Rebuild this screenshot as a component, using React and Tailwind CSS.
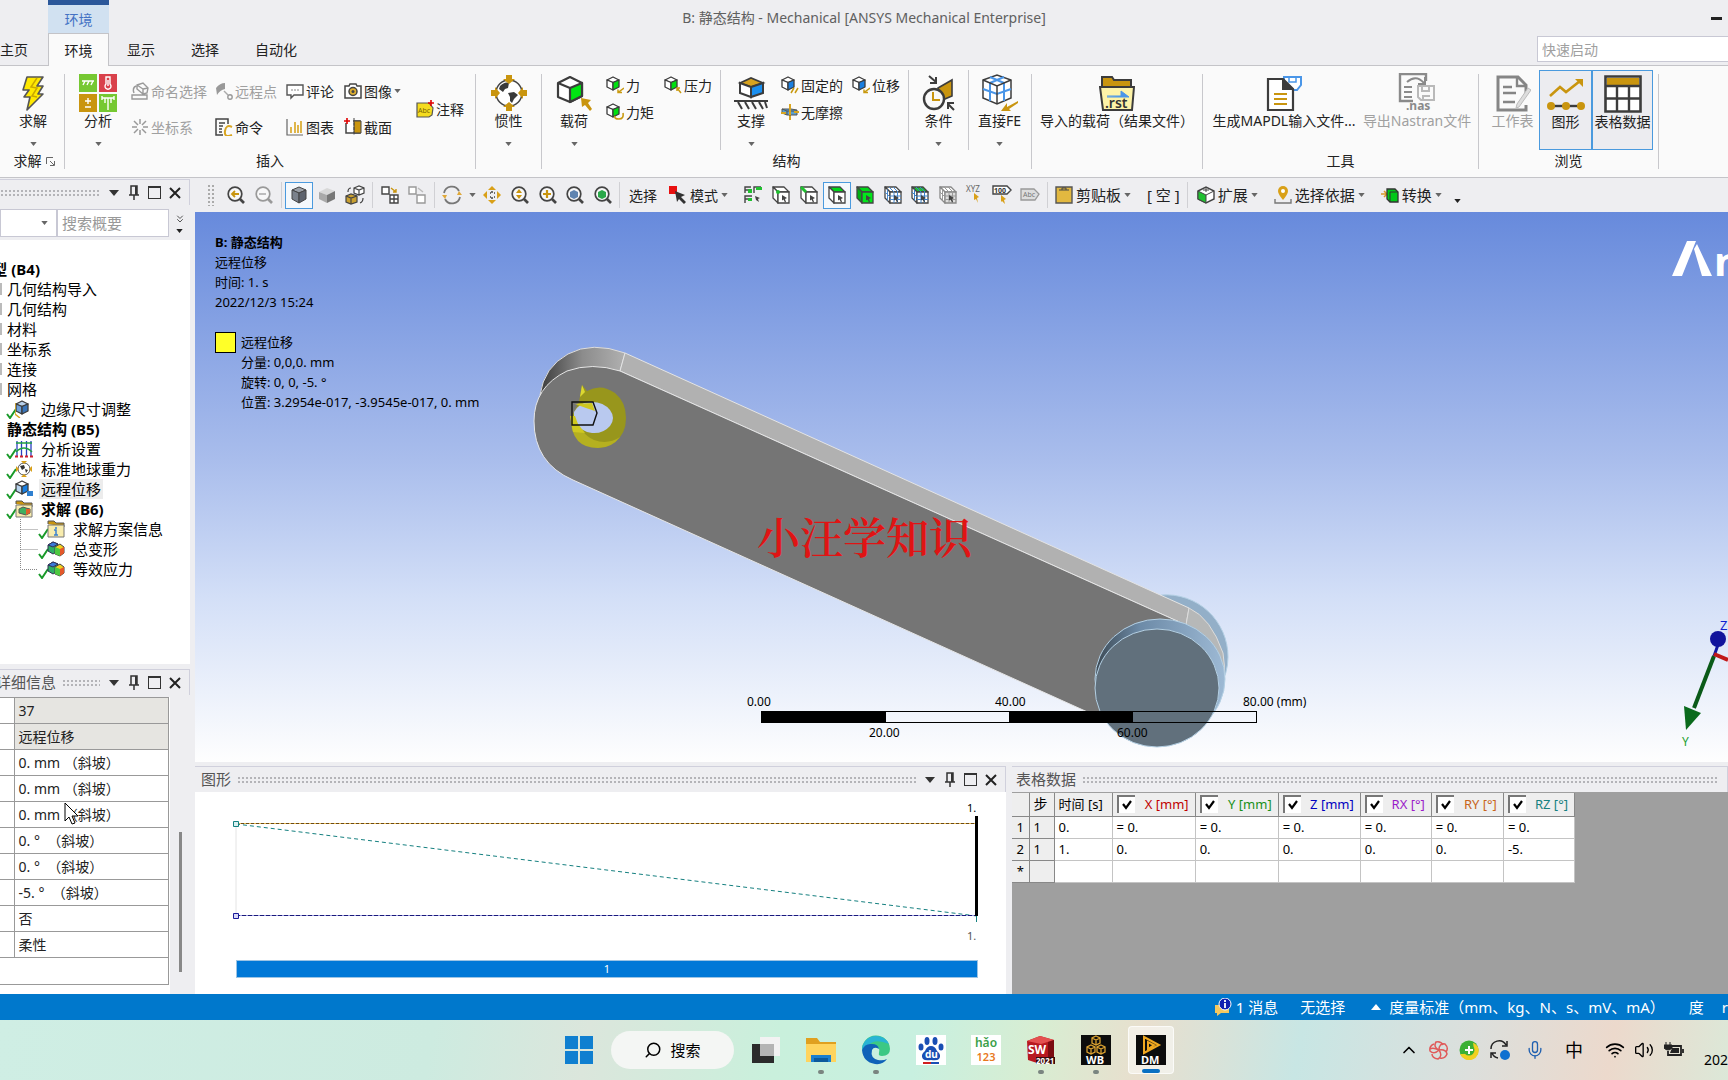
import React, { useState } from 'react';
import { ChevronsDown, ChevronUp, Mic, Search, Volume2, Wifi } from 'lucide-react';

const treeRows = [
  { label: '几何结构导入' },
  { label: '几何结构' },
  { label: '材料' },
  { label: '坐标系' },
  { label: '连接' },
  { label: '网格' },
];

const detailRows = [
  { value: '37', readOnly: true },
  { value: '远程位移', readOnly: true },
  { value: '0. mm （斜坡）' },
  { value: '0. mm （斜坡）' },
  { value: '0. mm （斜坡）' },
  { value: '0. °  （斜坡）' },
  { value: '0. °  （斜坡）' },
  { value: '-5. °  （斜坡）' },
  { value: '否' },
  { value: '柔性' },
];

const components = [
  { name: 'X [mm]', color: 'text-[#c00000]', width: 'w-[83px]' },
  { name: 'Y [mm]', color: 'text-[#189018]', width: 'w-[83px]' },
  { name: 'Z [mm]', color: 'text-[#0000c0]', width: 'w-[82px]' },
  { name: 'RX [°]', color: 'text-[#9a1bc9]', width: 'w-[71px]' },
  { name: 'RY [°]', color: 'text-[#c8651b]', width: 'w-[72px]' },
  { name: 'RZ [°]', color: 'text-[#158080]', width: 'w-[71px]' },
];

const tableRows = [
  { id: '1', step: '1', time: '0.', values: ['= 0.', '= 0.', '= 0.', '= 0.', '= 0.', '= 0.'] },
  { id: '2', step: '1', time: '1.', values: ['0.', '0.', '0.', '0.', '0.', '-5.'] },
  { id: '*', step: '', time: '', values: ['', '', '', '', '', ''] },
];

/* ---------- icons ---------- */

const Caret = ({ className = 'fill-[#666]' }) => (
  <svg viewBox="0 0 8 5" className={`h-1 w-[7px] shrink-0 ${className}`}>
    <path d="M0 0h8L4 5z" />
  </svg>
);

const BoltIcon = () => (
  <svg viewBox="0 0 36 36" className="h-9 w-9">
    <path
      d="M12 2h16l-6 9h6l-5 8h5L12 35l3-13H9l5-7H8z"
      fill="#ffe800"
      stroke="#555"
      strokeWidth="1.6"
      strokeLinejoin="round"
    />
    <path d="M22 3l-6 9 6 1-5 8 5 1" fill="none" stroke="#c9a800" strokeWidth="1.5" />
  </svg>
);

const AnalysisIcon = () => (
  <svg viewBox="0 0 38 38" className="h-[38px] w-[38px]">
    <path d="M0 0h18v18H0z" fill="#76c832" />
    <path d="M20 0h18v18H20z" fill="#d9414b" />
    <path d="M0 20h18v18H0z" fill="#c9950f" />
    <path d="M20 20h18v18H20z" fill="#76c832" />
    <path d="M3 7h12M4 11l2-4M8 11l2-4M12 11l2-4" stroke="#fff" strokeWidth="1.4" />
    <path
      d="M27 3h4v7a3 3 0 1 1-4 0zM29 6v6"
      fill="none"
      stroke="#fff"
      strokeWidth="1.4"
    />
    <path d="M6 27h6M9 24v6M6 33h6" stroke="#fff" strokeWidth="1.4" />
    <path d="M23 24h12M29 24v12M26 24v5M32 24v5M23 22v4M35 22v4" fill="none" stroke="#fff" strokeWidth="1.4" />
  </svg>
);

const Cube = ({ side = '#00e010', front = '#fff', top = '#fff', stroke = '#3c3c3c', size = 'h-[18px] w-[18px]', children }) => (
  <svg viewBox="0 0 18 18" className={`${size} shrink-0`}>
    <path d="M1 4l6-3 6 3-6 2.500z" fill={top} stroke={stroke} strokeWidth="1.300" strokeLinejoin="round" />
    <path d="M1 4v7l6 3V6.500z" fill={front} stroke={stroke} strokeWidth="1.300" strokeLinejoin="round" />
    <path d="M13 4v7l-6 3V6.500z" fill={side} stroke={stroke} strokeWidth="1.300" strokeLinejoin="round" />
    {children}
  </svg>
);

const ForceArrow = () => <path d="M18 12l-6 4.500m0-3v3h4" fill="none" stroke="#c99a10" strokeWidth="1.500" />;

const InertiaIcon = () => (
  <svg viewBox="0 0 36 36" className="h-9 w-9">
    <circle cx="18" cy="18" r="13" fill="#fff" stroke="#444" strokeWidth="1.5" />
    <path d="M9 11q5-5 9-3l-1 5-3 1-2 3-4-3zM17 18l6-1 4 3-4 4-2 4-2-2v-4z" fill="#3a3a3a" />
    <path d="M15 0h6v4h3l-6 5-6-5h3zM15 36h6v-4h3l-6-5-6 5h3zM0 15v6h4v3l5-6-5-6v3zM36 15v6h-4v3l-5-6 5-6v3z" fill="#c9950f" />
  </svg>
);

const LoadIcon = () => (
  <svg viewBox="0 0 36 36" className="h-9 w-9">
    <path d="M2 8l12-6 12 6v13l-12 6-12-5z" fill="#fff" stroke="#3c3c3c" strokeWidth="2.2" strokeLinejoin="round" />
    <path d="M14 13l12-5v13l-12 6z" fill="#00e612" stroke="#3c3c3c" strokeWidth="2.2" strokeLinejoin="round" />
    <path d="M2 8l12 5" stroke="#3c3c3c" strokeWidth="2.2" />
    <path d="M25 23l10 2-3 3 4 6-2 2-5-6-3 2z" fill="#c9950f" />
  </svg>
);

const SupportIcon = () => (
  <svg viewBox="0 0 36 36" className="h-9 w-9">
    <path d="M7 8l11-5 12 5-12 4z" fill="#d7a320" stroke="#3c3c3c" strokeWidth="1.8" />
    <path d="M7 8v10l11 4V12z" fill="#fff" stroke="#3c3c3c" strokeWidth="2" />
    <path d="M30 8v10l-12 4V12z" fill="#1a8ff0" stroke="#3c3c3c" strokeWidth="2" />
    <path d="M1 26h34M5 27l4 7M12 27l4 7M19 27l4 7M26 27l4 7M32 27l2 6" stroke="#3c3c3c" strokeWidth="2" />
  </svg>
);

const ConditionIcon = () => (
  <svg viewBox="0 0 36 36" className="h-9 w-9">
    <path d="M17 13l14-8v16l-12 5z" fill="#c9950f" stroke="#3c3c3c" strokeWidth="1.6" />
    <circle cx="13" cy="24" r="10" fill="#fafafa" stroke="#3c3c3c" strokeWidth="2.400" />
    <path d="M12 17v8h7" fill="none" stroke="#c9950f" strokeWidth="2" />
    <path d="M8 1l7 6m0-5v6H9M33 35l-6-6m0 5v-6h6" fill="none" stroke="#3c3c3c" strokeWidth="2" />
  </svg>
);

const DirectFeIcon = () => (
  <svg viewBox="0 0 38 38" className="h-[38px] w-[38px]">
    <path d="M2 6l14-5 14 5v18l-14 6-14-6z" fill="#fff" stroke="#3c3c3c" strokeWidth="1.500" />
    <path d="M2 15l14 5 14-5M9 9v18M23 9v18M9 3l14 6M23 3L9 9" fill="none" stroke="#4a96e8" strokeWidth="2" />
    <path d="M2 6l14 6 14-6M16 12v18" fill="none" stroke="#3c3c3c" strokeWidth="1.500" />
    <path d="M37 27l-11 6v-4l-6 8 10 0-2-2 9-6z" fill="#c9950f" />
  </svg>
);

const RstIcon = () => (
  <svg viewBox="0 0 36 36" className="h-9 w-9">
    <path d="M3 14V2h10l2 3h17v9" fill="#c9950f" stroke="#3c3c3c" strokeWidth="2" />
    <path d="M1 12h34l-2 23H4z" fill="#fdf3a8" stroke="#3c3c3c" strokeWidth="2" />
    <path d="M8 21h14v-5l8 6h-8M8 22h14" fill="#4a96e8" stroke="#4a96e8" />
    <text x="6" y="33" fontSize="14" fontWeight="600" fill="#333">.rst</text>
  </svg>
);

const MapdlIcon = () => (
  <svg viewBox="0 0 36 36" className="h-9 w-9">
    <path d="M18 2h17v8l-4 5h-13z" fill="#fff" stroke="#4a96e8" strokeWidth="2" />
    <path d="M23 2v5h7V2" fill="none" stroke="#4a96e8" strokeWidth="1.500" />
    <path d="M2 4h15l10 10v21H2z" fill="#fff" stroke="#3c3c3c" strokeWidth="2.200" />
    <path d="M16 3l12 12H16z" fill="#3c3c3c" />
    <path d="M8 19h13M8 24h13M8 29h13" stroke="#c9950f" strokeWidth="2" />
  </svg>
);

const NasIcon = () => (
  <svg viewBox="0 0 38 40" className="h-10 w-[38px]">
    <path d="M15 28H2V1h26v7" fill="none" stroke="#8a8a8a" strokeWidth="2.400" />
    <path d="M6 14h8M6 19h8M6 24h8" stroke="#8a8a8a" strokeWidth="2" />
    <path d="M9 9q9-8 17 1m1-6v7h-7" fill="none" stroke="#8a8a8a" strokeWidth="2" />
    <path d="M20 13h16v14h-13l-3-3zM24 13v5h7v-5M25 27v-4h7" fill="none" stroke="#b9b9b9" strokeWidth="2" />
    <text x="8" y="37" fontSize="12" fontWeight="700" fill="#8a8a8a">.nas</text>
  </svg>
);

const WorksheetIcon = () => (
  <svg viewBox="0 0 36 38" className="h-[38px] w-9">
    <path d="M31 20v-9l-8-8H3v33h28v-5" fill="none" stroke="#858585" strokeWidth="3" />
    <path d="M22 3v9h9M8 13h9M8 19h13M8 28h12" fill="none" stroke="#858585" strokeWidth="2.400" />
    <path d="M33 14l3 2-12 17-3 1 1-4z" fill="#ddd" stroke="#bbb" />
  </svg>
);

const GraphIcon = () => (
  <svg viewBox="0 0 38 38" className="h-[38px] w-[38px]">
    <path d="M3 21l10-9 6 5L33 6" fill="none" stroke="#c9950f" strokeWidth="2.600" />
    <path d="M28 4h8v8z" fill="#c9950f" />
    <path d="M4 31h30" stroke="#3c3c3c" strokeWidth="2.400" />
    <circle cx="4" cy="31" r="4" fill="#c9950f" />
    <circle cx="19" cy="31" r="4" fill="#c9950f" />
    <circle cx="34" cy="31" r="4" fill="#c9950f" />
  </svg>
);

const TableIcon = () => (
  <svg viewBox="0 0 38 38" className="h-[38px] w-[38px]">
    <path d="M1.500 1.500h35v35h-35z" fill="#fff" stroke="#3c3c3c" strokeWidth="2.600" />
    <path d="M3 3h32v7H3z" fill="#c9950f" />
    <path d="M2 11h34M2 23.500h34M13 11v25M25 11v25" stroke="#3c3c3c" strokeWidth="2.400" />
  </svg>
);

const smallIcon = 'h-[18px] w-[18px] shrink-0';

const NamedSelectionIcon = () => (
  <svg viewBox="0 0 18 18" className={smallIcon}>
    <path d="M6 3l6-2 5 5-1 5-4 1-6-5zM6 3l6 4v5M12 7l5-1M1 13h15v4H1zM3 11q-2-5 2-7" fill="none" stroke="#999" strokeWidth="1.400" />
  </svg>
);
const RemotePointIcon = () => (
  <svg viewBox="0 0 18 18" className={smallIcon}>
    <path d="M1 6q4-5 9-5v6q-5 1-8 6z" fill="#999" />
    <path d="M9 9l4 4" stroke="#aaa" strokeWidth="1.500" />
    <circle cx="15" cy="15" r="2.200" fill="none" stroke="#999" strokeWidth="1.400" />
  </svg>
);
const CommentIcon = () => (
  <svg viewBox="0 0 18 18" className={smallIcon}>
    <path d="M1 3h16v10H8l-3 3v-3H1z" fill="#fff" stroke="#555" strokeWidth="1.400" />
    <path d="M5 8h2M8 8h2M11 8h2" stroke="#888" />
  </svg>
);
const CameraIcon = () => (
  <svg viewBox="0 0 18 18" className={smallIcon}>
    <path d="M1 4h4l1-2h6l1 2h4v12H1z" fill="#fff" stroke="#444" strokeWidth="1.500" />
    <circle cx="9" cy="9.500" r="4" fill="#e0b030" stroke="#444" strokeWidth="1.500" />
    <circle cx="9" cy="9.500" r="1.500" fill="#444" />
  </svg>
);
const CoordIcon = () => (
  <svg viewBox="0 0 18 18" className={smallIcon}>
    <path d="M9 1v5M9 12v5M1 9h5M12 9h5M3 3l4 4M15 3l-4 4M3 15l4-4M15 15l-4-4" stroke="#999" strokeWidth="1.500" />
  </svg>
);
const CommandIcon = () => (
  <svg viewBox="0 0 18 18" className={smallIcon}>
    <path d="M8 17H1V1h12v5M4 5h6M4 8h4M4 11h3M4 14h3" fill="none" stroke="#444" strokeWidth="1.500" />
    <path d="M17 9q-6-3-7 4t7 4" fill="none" stroke="#d9a520" strokeWidth="2" />
  </svg>
);
const ChartIcon = () => (
  <svg viewBox="0 0 18 18" className={smallIcon}>
    <path d="M1 1v16h16" fill="none" stroke="#666" strokeWidth="1.200" />
    <path d="M5 15V9M9 15V4M12 15V7M15 15V3" stroke="#d9a520" strokeWidth="1.600" />
  </svg>
);
const SectionIcon = () => (
  <svg viewBox="0 0 18 18" className={smallIcon}>
    <path d="M2 5v10h14V3H9" fill="#fff" stroke="#444" strokeWidth="1.500" />
    <path d="M10 3h7v12h-7z" fill="#c9950f" stroke="#444" />
    <path d="M10 0v18" stroke="#444" strokeDasharray="3 1.500" />
    <path d="M0 3h6M3 0v6" stroke="#e00000" strokeWidth="1.600" />
  </svg>
);
const AnnotationIcon = () => (
  <svg viewBox="0 0 18 18" className={smallIcon}>
    <path d="M1 3h12l4 5-1 7-3 2H1z" fill="#f5dc1e" stroke="#555" strokeWidth="1.200" />
    <text x="2" y="13" fontSize="7" fill="#7a6500">Abc</text>
    <path d="M12 3h6M15 0v6" stroke="#e00000" strokeWidth="1.600" />
  </svg>
);

const Magnifier = ({ color = '#444', children }) => (
  <svg viewBox="0 0 20 20" className="h-5 w-5">
    <circle cx="9" cy="9" r="6.800" fill="#fff" fillOpacity="0.600" stroke={color} strokeWidth="1.700" />
    <path d="M14 14l4 4" stroke={color} strokeWidth="2.600" />
    {children}
  </svg>
);

const PickCube = ({ side = '#fff', top = '#fff', front = '#fff', stroke = '#444', mesh, children }) => (
  <svg viewBox="0 0 20 20" className="h-5 w-5">
    <path d="M2 2h11l5 5H7z" fill={top} stroke={stroke} strokeWidth="1.300" strokeLinejoin="round" />
    <path d="M2 2v11l5 5V7z" fill={side} stroke={stroke} strokeWidth="1.300" strokeLinejoin="round" />
    <path d="M7 7h11v11H7z" fill={front} stroke={stroke} strokeWidth="1.300" />
    {mesh && <path d="M11 7v11M14.500 7v11M7 11h11M7 14.500h11M4.500 4.500v11M2 7l5 5M6 2l5 5M10 2l5 5" fill="none" stroke={mesh} />}
    <path d="M11 10l5 3-2 1 1 3-1 .5-1.500-3-1.500 1z" fill="#444" />
    {children}
  </svg>
);

const Pin = () => (
  <svg viewBox="0 0 12 16" className="h-4 w-3">
    <path d="M3 1h6v9H3zM1 10h10M6 10v5" fill="none" stroke="#333" strokeWidth="1.500" />
    <path d="M7 1h2v9H7z" fill="#333" />
  </svg>
);

const Check = () => (
  <svg viewBox="0 0 10 11" className="-mr-px h-[11px] w-2.5 shrink-0 self-end">
    <path d="M1 6l3 4 6-9" fill="none" stroke="#1a9a2a" strokeWidth="2" />
  </svg>
);

const FolderIcon = ({ children }) => (
  <svg viewBox="0 0 18 18" className={smallIcon}>
    <path d="M1 4V1h6l2 2h8v4" fill="#c9950f" stroke="#555" />
    <path d="M1 5h16v12H1z" fill="#f8ecae" stroke="#777" />
    {children}
  </svg>
);

const ResultIcon = () => (
  <svg viewBox="0 0 18 18" className={smallIcon}>
    <path d="M1 5l5-3 5 2v7l-5 3-5-3z" fill="#2fae66" stroke="#335" />
    <path d="M1 5l5-3 5 2-5 3z" fill="#3a78d8" stroke="#335" />
    <path d="M8 7l5-3 4 3v6l-4 3-5-2z" fill="#f0d020" stroke="#444" />
    <path d="M8 7l5 2v7l-5-2z" fill="#4cc940" />
    <path d="M13 9l4-2v6l-4 3z" fill="#e4572a" />
  </svg>
);

/* ---------- ribbon ---------- */

const BigButton = ({ icon, label, caret, disabled, active, width }) => (
  <button
    disabled={disabled}
    className={`flex h-20 shrink-0 flex-col items-center whitespace-nowrap pt-[3px] ${width} ${
      active ? 'border border-[#4a9ade] bg-[#ececf0]' : ''
    } ${disabled ? 'text-[#a0a0a0]' : ''}`}
  >
    <span className="flex h-10 items-center">{icon}</span>
    <span className="leading-4">{label}</span>
    {caret && <Caret className="mt-[13px] fill-[#666]" />}
  </button>
);

const SmallButton = ({ icon, label, caret, disabled }) => (
  <button
    disabled={disabled}
    className={`flex h-6 items-center gap-0.5 whitespace-nowrap ${disabled ? 'text-[#a0a0a0]' : ''}`}
  >
    {icon}
    <span>{label}</span>
    {caret && <Caret />}
  </button>
);

const Group = ({ label, width, launcher, children }) => (
  <div className={`flex shrink-0 flex-col pt-1 ${width}`}>
    <div className="flex h-20">{children}</div>
    <div className="flex items-center justify-center gap-1 leading-[22px]">
      {label}
      {launcher && (
        <svg viewBox="0 0 9 9" className="h-[9px] w-[9px]">
          <path d="M.5 7V.5H7M4 4l4 4M8.500 4v4.500H4" fill="none" stroke="#666" />
        </svg>
      )}
    </div>
  </div>
);

const Divider = () => <div className="my-2 w-px shrink-0 bg-[#c8c8cc]" />;
const InnerDivider = () => <div className="h-20 w-px shrink-0 bg-[#c8c8cc]" />;

const TitleBar = () => (
  <header className="shrink-0 border-b border-[#c4c4c8] bg-[#eeeef1]">
    <div className="flex h-[33px] items-center">
      <div className="ml-12 flex h-full w-[61px] items-center justify-center border-t-[5px] border-[#2b579a] bg-[#d1e1f1] text-[#4472c4]">
        环境
      </div>
      <h1 className="flex-1 pl-[26px] pr-[118px] pt-0.5 text-center text-[14px] text-[#606060]">
        B: 静态结构 - Mechanical [ANSYS Mechanical Enterprise]
      </h1>
      <button aria-label="最小化" className="mr-1.5 mt-1 h-[3px] w-[11px] bg-[#222]" />
    </div>
    <div className="flex h-8 items-center">
      <nav className="flex h-full flex-1 items-center">
        <button className="w-12 pr-5 text-right whitespace-nowrap">主页</button>
        <button className="-mb-px h-[33px] w-[61px] self-start border-x border-t border-[#c4c4c8] bg-[#fafafa]">
          环境
        </button>
        <button className="w-16">显示</button>
        <button className="w-16">选择</button>
        <button className="w-[78px]">自动化</button>
      </nav>
      <input
        aria-label="快速启动"
        placeholder="快速启动"
        className="h-[26px] w-[191px] border border-r-0 border-[#c8c8d4] bg-white px-1 placeholder:text-[#a0a0a0]"
      />
    </div>
  </header>
);

const Ribbon = () => (
  <div className="flex h-28 shrink-0 overflow-hidden border-b border-[#c4c4c8] bg-[#fafafa]">
    <Group label="求解" width="w-16 pl-1" launcher>
      <BigButton icon={<BoltIcon />} label="求解" caret width="w-[58px]" />
    </Group>
    <Divider />
    <Group label="插入" width="w-[410px]">
      <BigButton icon={<AnalysisIcon />} label="分析" caret width="w-[66px]" />
      <div className="flex flex-1 items-start pt-[9px]">
        <div className="flex w-[84px] flex-col gap-3">
          <SmallButton icon={<NamedSelectionIcon />} label="命名选择" disabled />
          <SmallButton icon={<CoordIcon />} label="坐标系" disabled />
        </div>
        <div className="flex w-[71px] flex-col gap-3">
          <SmallButton icon={<RemotePointIcon />} label="远程点" disabled />
          <SmallButton icon={<CommandIcon />} label="命令" />
        </div>
        <div className="flex w-[58px] flex-col gap-3">
          <SmallButton icon={<CommentIcon />} label="评论" />
          <SmallButton icon={<ChartIcon />} label="图表" />
        </div>
        <div className="flex w-[72px] flex-col gap-3">
          <SmallButton icon={<CameraIcon />} label="图像" caret />
          <SmallButton icon={<SectionIcon />} label="截面" />
        </div>
        <div className="pt-[18px]">
          <SmallButton icon={<AnnotationIcon />} label="注释" />
        </div>
      </div>
    </Group>
    <Divider />
    <Group label="" width="w-[65px]">
      <BigButton icon={<InertiaIcon />} label="惯性" caret width="w-[65px]" />
    </Group>
    <Divider />
    <Group label="结构" width="w-[489px]">
      <BigButton icon={<LoadIcon />} label="载荷" caret width="w-16" />
      <div className="flex w-[114px] gap-2.5 pt-[3px]">
        <div className="flex flex-col gap-[3px]">
          <SmallButton icon={<Cube><ForceArrow /></Cube>} label="力" />
          <SmallButton
            icon={
              <Cube>
                <path d="M17 10q1 6-4 6t-4-3" fill="none" stroke="#c99a10" strokeWidth="1.600" />
              </Cube>
            }
            label="力矩"
          />
        </div>
        <div>
          <SmallButton
            icon={
              <Cube>
                <path d="M17 17l-4-5m0 3v-3h3" fill="none" stroke="#c99a10" strokeWidth="1.500" />
              </Cube>
            }
            label="压力"
          />
        </div>
      </div>
      <InnerDivider />
      <BigButton icon={<SupportIcon />} label="支撑" caret width="w-[60px]" />
      <div className="flex w-[127px] gap-[9px] pt-[3px]">
        <div className="flex flex-col gap-[3px]">
          <SmallButton icon={<Cube side="#1a7fe0"><path d="M13 12l-3 5M17 12l-3 5" stroke="#c99a10" strokeWidth="1.500" /></Cube>} label="固定的" />
          <SmallButton
            icon={
              <svg viewBox="0 0 18 18" className={smallIcon}>
                <path d="M9 1v16" stroke="#d9a520" strokeWidth="2" />
                <path d="M1 6h9l6 1v5H6l-5-2z" fill="#5aa0d0" stroke="#555" />
                <path d="M1 6l5 2h10M6 8v4" fill="none" stroke="#555" />
                <path d="M0 10h5M13 9h5M9 5v7" stroke="#d9a520" strokeWidth="2" />
              </svg>
            }
            label="无摩擦"
          />
        </div>
        <div>
          <SmallButton icon={<Cube side="#1a7fe0"><ForceArrow /></Cube>} label="位移" />
        </div>
      </div>
      <InnerDivider />
      <BigButton icon={<ConditionIcon />} label="条件" caret width="w-[59px]" />
      <InnerDivider />
      <BigButton icon={<DirectFeIcon />} label="直接FE" caret width="w-[61px]" />
    </Group>
    <Divider />
    <Group label="" width="w-[170px]">
      <BigButton icon={<RstIcon />} label="导入的载荷（结果文件）" width="w-[170px]" />
    </Group>
    <Divider />
    <Group label="工具" width="w-[275px]">
      <BigButton icon={<MapdlIcon />} label="生成MAPDL输入文件..." width="w-[162px]" />
      <BigButton icon={<NasIcon />} label="导出Nastran文件" disabled width="w-[104px]" />
    </Group>
    <Divider />
    <Group label="浏览" width="w-[179px]">
      <BigButton icon={<WorksheetIcon />} label="工作表" disabled width="ml-[7px] w-[53px]" />
      <BigButton icon={<GraphIcon />} label="图形" active width="w-[53px]" />
      <BigButton icon={<TableIcon />} label="表格数据" active width="w-[61px]" />
    </Group>
    <Divider />
  </div>
);

/* ---------- graphics toolbar ---------- */

const Tool = ({ label, active, width = 'w-7', children }) => (
  <button
    aria-label={label}
    className={`flex h-[27px] shrink-0 items-center justify-center ${width} ${
      active ? 'border border-[#4a9ade] bg-[#f4f8fc]' : ''
    }`}
  >
    {children}
  </button>
);

const ToolSep = () => <div className="mx-[3px] h-[26px] w-px shrink-0 bg-[#d0d0d4]" />;

const MenuTool = ({ icon, label, className }) => (
  <button className={`flex h-[27px] shrink-0 items-center gap-[3px] whitespace-nowrap ${className}`}>
    {icon}
    <span>{label}</span>
    <Caret />
  </button>
);

const GraphicsToolbar = () => (
  <div className="flex h-[34px] shrink-0 items-center overflow-hidden bg-[#eeeef1] pl-3">
    <div className="mr-2 h-[22px] w-[7px] bg-[radial-gradient(#aaa_1px,transparent_1px)] bg-[size:4px_4px]" />
    <Tool label="上一视图">
      <Magnifier><path d="M13 9H6m3-3L6 9l3 3" fill="none" stroke="#c9950f" strokeWidth="1.800" /></Magnifier>
    </Tool>
    <Tool label="下一视图">
      <Magnifier color="#999"><path d="M5 9h7" stroke="#aaa" strokeWidth="1.500" /></Magnifier>
    </Tool>
    <ToolSep />
    <Tool label="着色显示" active>
      <svg viewBox="0 0 20 20" className="h-5 w-5">
        <path d="M3 5l7-3 7 3-7 3z" fill="#9aa0a8" stroke="#444" />
        <path d="M3 5v9l7 4V8z" fill="#7b828c" stroke="#444" />
        <path d="M17 5v9l-7 4V8z" fill="#5c636e" stroke="#444" />
      </svg>
    </Tool>
    <Tool label="线框">
      <svg viewBox="0 0 20 20" className="h-5 w-5">
        <path d="M2 7l8-4 8 3-8 4z" fill="#d8d8d8" />
        <path d="M2 7v7l8 4v-8z" fill="#a9a9a9" />
        <path d="M18 6v8l-8 4v-8z" fill="#777" />
      </svg>
    </Tool>
    <Tool label="切换视图">
      <svg viewBox="0 0 20 20" className="h-5 w-5">
        <path d="M9 3l5-2 5 2v5l-5 2-5-2zM9 3l5 2 5-2M14 5v5" fill="#fff" stroke="#444" strokeWidth="1.200" />
        <path d="M1 11l5-2 6 2v6l-6 2-5-2z" fill="#c9a030" stroke="#444" strokeWidth="1.200" />
        <path d="M1 11l5 2 6-2M6 13v6M3 7q0-4 3-4M18 13q0 4-3 5" fill="none" stroke="#444" strokeWidth="1.200" />
      </svg>
    </Tool>
    <ToolSep />
    <Tool label="展开全部" width="w-[27px]">
      <svg viewBox="0 0 20 20" className="h-5 w-5">
        <path d="M2 2h7v7H2zM10 10h8v8h-8zM14 10v8M10 14h8" fill="#fff" stroke="#444" strokeWidth="1.400" />
        <path d="M11 3l5 4m0-3v3h-3" fill="none" stroke="#c9950f" strokeWidth="1.400" />
      </svg>
    </Tool>
    <Tool label="折叠">
      <svg viewBox="0 0 20 20" className="h-5 w-5">
        <path d="M2 2h7v7H2zM10 10h8v8h-8z" fill="#fff" stroke="#999" strokeWidth="1.400" />
        <path d="M11 3l5 4" stroke="#bbb" strokeWidth="1.400" />
      </svg>
    </Tool>
    <ToolSep />
    <Tool label="旋转">
      <svg viewBox="0 0 20 20" className="h-5 w-5">
        <path d="M2 8a8 8 0 0 1 15-2M18 12A8 8 0 0 1 3 14" fill="none" stroke="#777" strokeWidth="1.800" />
        <path d="M0 10h5l-2 4zM20 10h-5l2-4z" fill="#e0a838" />
      </svg>
    </Tool>
    <Tool label="旋转选项" width="w-3"><Caret /></Tool>
    <Tool label="平移">
      <svg viewBox="0 0 20 20" className="h-5 w-5">
        <path d="M10 1l4 4H6zM10 19l4-4H6zM1 10l4-4v8zM19 10l-4-4v8z" fill="#d9a018" />
        <path d="M8 8h1M12 8h1M8 12h1M12 12h1M10 6v2M10 12v2" stroke="#444" strokeWidth="1.500" />
      </svg>
    </Tool>
    <Tool label="缩放"><Magnifier><path d="M9 4l3 4H6zM9 14l3-4H6z" fill="#c9950f" /></Magnifier></Tool>
    <Tool label="框选缩放" width="w-[27px]"><Magnifier><path d="M5 9h8M9 5v8" stroke="#c9950f" strokeWidth="2.200" /></Magnifier></Tool>
    <Tool label="缩放至合适"><Magnifier><path d="M5 7l4-2 4 2v5l-4 2-4-2z" fill="#5f84b0" /></Magnifier></Tool>
    <Tool label="缩放至选择" width="w-[27px]"><Magnifier><path d="M5 7l4-2 4 2v5l-4 2-4-2z" fill="#2ba84a" /></Magnifier></Tool>
    <ToolSep />
    <span className="shrink-0 px-1.5">选择</span>
    <MenuTool
      className="ml-1.5 mr-[11px] text-[14px]"
      label="模式"
      icon={
        <svg viewBox="0 0 18 18" className={smallIcon}>
          <path d="M0 0h8v8H0z" fill="#e81010" />
          <path d="M6 5l10 4-4 2 5 5-2 2-5-5-2 3z" fill="#333" />
        </svg>
      }
    />
    <Tool label="选择模式">
      <svg viewBox="0 0 20 20" className="h-5 w-5">
        <path d="M2 8V2h6M2 5h5M2 18v-7h7M2 14h5M11 8V2h7" fill="none" stroke="#444" strokeWidth="1.400" />
        <path d="M5 4h4v4H5zM13 2h6v3h-6zM5 13h4v3H5z" fill="#20c030" />
        <path d="M12 11l5 2-2 1 1 3-3-2z" fill="#444" />
      </svg>
    </Tool>
    <Tool label="顶点"><PickCube><circle cx="7" cy="7" r="2" fill="#20c030" /></PickCube></Tool>
    <Tool label="边"><PickCube><path d="M2 2l5 5" stroke="#20c030" strokeWidth="3" /></PickCube></Tool>
    <Tool label="面" active><PickCube top="#00d818" /></Tool>
    <Tool label="体"><PickCube side="#00b010" top="#00d818" front="#00e81a" /></Tool>
    <Tool label="节点" width="w-[27px]"><PickCube mesh="#4a8ad0" /></Tool>
    <Tool label="单元面"><PickCube mesh="#3a80c8" top="#20c030" /></Tool>
    <Tool label="单元" width="w-[27px]"><PickCube mesh="#999" stroke="#888" front="#ddd" /></Tool>
    <Tool label="坐标" width="w-[27px]">
      <svg viewBox="0 0 20 20" className="h-5 w-5">
        <text x="1" y="7" fontSize="8" fill="#666">XYZ</text>
        <path d="M9 8l5 4-2 1 1 5-2-4-2 1z" fill="#d9a018" />
      </svg>
    </Tool>
    <Tool label="标签">
      <svg viewBox="0 0 20 20" className="h-5 w-5">
        <path d="M1 1h14l4 4-4 4H1z" fill="#fff" stroke="#444" strokeWidth="1.400" />
        <text x="2" y="8" fontSize="7" fontWeight="700" fill="#333">100</text>
        <path d="M9 10l5 4-2 1 1 4-3-3-1 1z" fill="#d9a018" />
      </svg>
    </Tool>
    <Tool label="注释标签">
      <svg viewBox="0 0 20 20" className="h-5 w-5">
        <path d="M1 4h13l5 5-4 6H1z" fill="#ddd" stroke="#999" strokeWidth="1.300" />
        <text x="3" y="12" fontSize="7" fill="#777">Abc</text>
      </svg>
    </Tool>
    <ToolSep />
    <MenuTool
      className="ml-1 text-[15px]"
      label="剪贴板"
      icon={
        <svg viewBox="0 0 18 18" className={smallIcon}>
          <path d="M1 1h16v16H1z" fill="#e2b840" stroke="#555" strokeWidth="1.400" />
          <path d="M4 4h10M7 4V2h4v2" fill="none" stroke="#444" />
        </svg>
      }
    />
    <span className="ml-4 mr-1 shrink-0 whitespace-nowrap text-[15px]">[ 空 ]</span>
    <ToolSep />
    <MenuTool
      className="ml-1.5 text-[15px]"
      label="扩展"
      icon={
        <svg viewBox="0 0 18 18" className={smallIcon}>
          <path d="M1 5l8-4 8 4v8l-8 4-8-4z" fill="#fff" stroke="#444" strokeWidth="1.400" />
          <path d="M1 5l8 4v8l-8-4z" fill="#20c030" stroke="#444" />
          <path d="M9 9l8-4M6 4h6M9 2v4" stroke="#444" />
        </svg>
      }
    />
    <MenuTool
      className="ml-4 text-[15px]"
      label="选择依据"
      icon={
        <svg viewBox="0 0 18 18" className={smallIcon}>
          <path d="M9 14q-5-6-5-9a5 5 0 0 1 10 0q0 3-5 9z" fill="#d9a018" />
          <circle cx="9" cy="5" r="2" fill="#fff" />
          <path d="M1 13v4h16v-4" fill="none" stroke="#777" strokeWidth="1.400" />
        </svg>
      }
    />
    <MenuTool
      className="ml-4 text-[15px]"
      label="转换"
      icon={
        <svg viewBox="0 0 18 18" className={smallIcon}>
          <path d="M0 8h5M3 5l3 3-3 3" fill="none" stroke="#d99a28" strokeWidth="1.500" />
          <path d="M6 3h8l3 3v10H9l-3-3z" fill="#00c818" stroke="#333" strokeWidth="1.300" />
          <path d="M9 6h8M9 6v10" stroke="#333" />
        </svg>
      }
    />
    <Caret className="ml-3 mt-3 fill-[#222]" />
  </div>
);

/* ---------- docked panels ---------- */

const PanelHeader = ({ title, controls = true, shift = 'pl-1.5' }) => (
  <div className={`flex h-[26px] shrink-0 items-center border-r border-t border-[#d0d0dc] bg-[#eeeef1] pr-2 ${shift}`}>
    {title && <h2 className="mr-1.5 shrink-0 whitespace-nowrap text-[15px] text-[#555]">{title}</h2>}
    <div className="h-[7px] min-w-0 flex-1 bg-[radial-gradient(#b4b4b8_1px,transparent_1px)] bg-[size:4px_4px]" />
    {controls && (
      <div className="ml-2 flex shrink-0 items-center gap-2">
        <button aria-label="窗口位置" className="flex h-4 w-3 items-center justify-center">
          <svg viewBox="0 0 10 6" className="h-1.5 w-2.5">
            <path d="M0 0h10L5 6z" fill="#333" />
          </svg>
        </button>
        <button aria-label="自动隐藏"><Pin /></button>
        <button aria-label="最大化" className="h-[13px] w-[13px] border border-t-2 border-[#333]" />
        <button aria-label="关闭">
          <svg viewBox="0 0 12 12" className="h-3 w-3">
            <path d="M1 1l10 10M11 1L1 11" stroke="#222" strokeWidth="2" />
          </svg>
        </button>
      </div>
    )}
  </div>
);

const TreeItem = ({ icon, label, bold, selected, nested, last }) => (
  <li className={`flex h-5 items-center ${nested ? 'pl-5' : 'pl-1.5'}`}>
    {nested && (
      <svg viewBox="0 0 18 20" className="h-5 w-[18px] shrink-0">
        <path
          d={last ? 'M.5 0V10.500H18' : 'M.5 0V20M.5 10.500H18'}
          fill="none"
          stroke="#888"
          strokeDasharray="1 1"
        />
      </svg>
    )}
    <Check />
    {icon}
    <span className={`ml-1.5 whitespace-nowrap px-0.5 leading-5 ${bold ? 'font-bold' : ''} ${selected ? 'bg-[#ececec]' : ''}`}>
      {label}
    </span>
  </li>
);

const Outline = () => (
  <section className="flex min-h-0 flex-1 flex-col">
    <PanelHeader shift="" />
    <div className="flex h-[35px] shrink-0 items-center">
      <select aria-label="筛选" className="h-7 w-[57px] appearance-none border border-[#c8c8d4] bg-white" />
      <span className="-ml-4 mr-2 flex w-2"><Caret /></span>
      <input
        aria-label="搜索概要"
        placeholder="搜索概要"
        className="h-7 w-28 border border-[#c8c8d4] bg-white px-1 text-[15px] placeholder:text-[#999]"
      />
      <div className="flex flex-1 flex-col items-center gap-1">
        <ChevronsDown className="h-3 w-3 text-[#555]" />
        <Caret className="fill-[#222]" />
      </div>
    </div>
    <ul className="min-h-0 flex-1 overflow-hidden bg-white pt-[19px] text-[15px] leading-5 text-black">
      <li className="flex h-5 w-10 justify-end whitespace-nowrap font-bold">型 (B4)</li>
      {treeRows.map(row => (
        <li key={row.label} className="flex h-5 items-center gap-[5px]">
          <span className="h-3 w-0.5 bg-[#bbb]" />
          {row.label}
        </li>
      ))}
      <TreeItem
        label="边缘尺寸调整"
        icon={<Cube side="#3a74b8" front="#6fa0d8" top="#b8d0ea"><path d="M0 3v11l5 4" fill="none" stroke="#d9a520" strokeWidth="1.500" /></Cube>}
      />
      <li className="h-5 whitespace-nowrap pl-[7px] font-bold">静态结构 (B5)</li>
      <TreeItem
        label="分析设置"
        icon={
          <svg viewBox="0 0 18 18" className={smallIcon}>
            <path d="M2 1v15M6.500 1v15M11.500 1v15M16 1v15" stroke="#2a40c0" strokeWidth="1.300" />
            <path d="M1 3h16M1 12q8-8 16 0" fill="none" stroke="#20a040" strokeWidth="1.500" />
            <path d="M0 16.500h18" stroke="#d02030" strokeWidth="2" strokeDasharray="3 2" />
          </svg>
        }
      />
      <TreeItem
        label="标准地球重力"
        icon={<svg viewBox="0 0 18 18" className={smallIcon}>
          <circle cx="9" cy="9" r="6" fill="#fff" stroke="#555" />
          <path d="M5 6l4-1 1 3-3 2zM10 9l3 1-2 3z" fill="#333" />
          <path d="M9 4L6 1h6zM9 14l3 3H6zM4 9l-3 3V6zM14 9l3-3v6z" fill="#d9a018" />
        </svg>}
      />
      <TreeItem
        label="远程位移"
        selected
        icon={<Cube side="#1a7fe0" front="#b8d4ee"><path d="M12 11h6v5h-6z" fill="#2f80d0" /></Cube>}
      />
      <TreeItem
        label="求解 (B6)"
        bold
        icon={<FolderIcon><path d="M4 9l4-2 3 1 4 1v4l-4 2-7-2z" fill="#3fb060" stroke="#555" /><path d="M11 9l4 0v4l-4 2z" fill="#e0602a" /></FolderIcon>}
      />
      <TreeItem
        nested
        label="求解方案信息"
        icon={<FolderIcon><path d="M9 7v2M7 10h2v5M7 15h4" fill="none" stroke="#3a80d0" strokeWidth="1.500" /></FolderIcon>}
      />
      <TreeItem nested label="总变形" icon={<ResultIcon />} />
      <TreeItem nested last label="等效应力" icon={<ResultIcon />} />
    </ul>
  </section>
);

const Details = () => (
  <section className="mt-[5px] flex h-[325px] shrink-0 flex-col">
    <div className="-ml-1">
      <PanelHeader title="详细信息" shift="" />
    </div>
    <div className="relative mt-0.5 flex flex-1 items-start">
      <div className="h-full w-[170px] bg-white">
        <table className="w-[169px] table-fixed border-collapse text-[14px]">
          <tbody>
            {detailRows.map((row, i) => (
              <tr key={i} className="h-[26px]">
                <td className="w-[14px] border-b border-t border-[#999]" />
                <td className={`whitespace-pre border border-[#999] pl-1 leading-5 ${row.readOnly ? 'bg-[#e6e5e1]' : ''}`}>
                  {row.value}
                </td>
              </tr>
            ))}
            <tr className="h-[27px]">
              <td colSpan={2} className="border-b border-r border-[#999]" />
            </tr>
          </tbody>
        </table>
      </div>
      <div className="ml-[9px] mt-[135px] h-[140px] w-[3px] bg-[#888]" />
      {/* mouse pointer */}
      <svg viewBox="0 0 15 24" className="absolute left-16 top-[105px] h-6 w-[15px]">
        <path d="M1 1v18l4-4 3 7 3-1-3-7h6z" fill="#fff" stroke="#000" />
      </svg>
    </div>
  </section>
);

/* ---------- 3D view ---------- */

const Model = () => (
  <svg viewBox="0 0 1100 550" className="absolute left-0 top-0 h-[550px] w-[1100px]">
    <defs>
      <linearGradient id="cap" x1="0" x2="1" y1="0" y2="0">
        <stop offset="0" stopColor="#3c3c3c" />
        <stop offset="0.5" stopColor="#8c8c8c" />
        <stop offset="1" stopColor="#b0b0b0" />
      </linearGradient>
      <linearGradient id="rim" x1="0" x2="1" y1="0" y2="0">
        <stop offset="0" stopColor="#3b4852" />
        <stop offset="0.35" stopColor="#6d8ba8" />
        <stop offset="1" stopColor="#9db9d4" />
      </linearGradient>
    </defs>
    <path d="M966 383a62 62 0 0 1 67 62q0 16-9 32l-40-60z" fill="#93afc8" stroke="#b4d0e4" />
    <path d="M345 183q4-28 28-41t57-1l-5 18-50 0z" fill="url(#cap)" stroke="#ddd" />
    <path d="M430 141L994 396l-3 17L425 159z" fill="#b1b1b1" stroke="#e4e4e4" />
    <path d="M994 396q22 10 34 45 4 26-3 36-8-40-34-64z" fill="#b6b8b8" stroke="#dcdcdc" />
    <path
      d="M425 159q-28-9-53 0-33 16-33 50 0 42 39 59L908 507 991 413z"
      fill="#757575"
      stroke="#e6e6e6"
    />
    <ellipse cx="965" cy="467" rx="65" ry="60" fill="url(#rim)" stroke="#b4d0e4" />
    <ellipse cx="962" cy="476" rx="62" ry="59" fill="#61707c" stroke="#b4d0e4" />

    {/* rotation marker around the hole */}
    <path d="M384 190l3-17 5 6q14-8 28 2 11 9 11 25t-11 24q-14 10-29 2-15-8-15-26z" fill="#98961c" />
    <path d="M376 206q0 30 27 30 14 0 22-11-12 8-26 3-14-6-17-24z" fill="#b5b020" />
    <path d="M387 173l-2 12 5-5z" fill="#dcd830" />
    <path d="M379 200q5-9 15-10 14-1 21 8 6 8 0 16-7 8-18 7-13-2-18-12z" fill="#b9c9ef" />
    <path d="M380 192l17-1 3 8-9-3zM375 204l5 0 3 8 7 9-12-1z" fill="#cfc820" />
    <path d="M377 190h21l4 11-4 12h-21z" fill="none" stroke="#111" strokeWidth="1.400" />
  </svg>
);

const ScaleRuler = () => (
  <div className="absolute left-[552px] top-[481px] text-[12px] leading-[18px] text-black">
    <div className="grid grid-cols-[248px_248px_74px]">
      <span>0.00</span>
      <span>40.00</span>
      <span className="whitespace-nowrap">80.00 (mm)</span>
    </div>
    <div className="ml-3.5 flex h-3 w-[496px] border border-black">
      <div className="flex-1 bg-black" />
      <div className="flex-1" />
      <div className="flex-1 bg-black" />
      <div className="flex-1" />
    </div>
    <div className="mt-px grid grid-cols-[248px_248px] pl-[122px]">
      <span>20.00</span>
      <span>60.00</span>
    </div>
  </div>
);

const Viewport = () => (
  <main className="relative min-h-0 flex-1 overflow-hidden bg-[linear-gradient(to_bottom,#678adc,#a9bdec_45%,#d3dff7_70%,#fefefe)]">
    <Model />
    <div className="relative px-5 pt-5 text-[13px] leading-5 text-black">
      <p className="font-bold">B: 静态结构</p>
      <p>远程位移</p>
      <p>时间: 1. s</p>
      <p>2022/12/3 15:24</p>
      <div className="mt-5 flex gap-[5px]">
        <span className="h-[21px] w-[21px] border border-black bg-[#ffff28]" />
        <div>
          <p>远程位移</p>
          <p>分量: 0,0,0. mm</p>
          <p>旋转: 0, 0, -5. °</p>
          <p>位置: 3.2954e-017, -3.9545e-017, 0. mm</p>
        </div>
      </div>
    </div>
    <p className="absolute left-[562px] top-[292px] whitespace-nowrap font-['Noto_Serif_CJK_SC','Noto_Sans_CJK_SC',serif] text-[43px] font-semibold leading-[64px] text-[#e01414]">
      小汪学知识
    </p>
    <ScaleRuler />
    <div className="absolute right-0 top-6 flex h-10 w-14 items-end overflow-hidden">
      <svg viewBox="0 0 42 35" className="h-[35px] w-[42px] shrink-0">
        <path d="M0 35L15 0h9L10 35zM22 8l3-5 15 32h-10z" fill="#fff" />
      </svg>
      <span className="text-[42px] font-bold leading-[30px] text-white">n</span>
    </div>
    {/* axis triad */}
    <svg viewBox="0 0 52 140" className="absolute right-0 top-[400px] h-[140px] w-[52px]">
      <text x="44" y="18" fontSize="13" fill="#1020d0">Z</text>
      <path d="M38 44L18 96" stroke="#0a5a18" strokeWidth="4" />
      <path d="M8 94l17 7-15 17z" fill="#0a6a1c" />
      <path d="M38 44l5-14" stroke="#1418a0" strokeWidth="3" />
      <circle cx="42" cy="27" r="8" fill="#12149c" />
      <path d="M38 42l14 6" stroke="#c01818" strokeWidth="4" />
      <text x="6" y="134" fontSize="12" fill="#18a030">Y</text>
    </svg>
  </main>
);

/* ---------- bottom panels ---------- */

const GraphPanel = () => (
  <section className="flex w-[811px] shrink-0 flex-col bg-white">
    <PanelHeader title="图形" />
    <div className="flex-1 pl-[30px] pr-7 pt-2">
      <svg viewBox="0 0 753 146" className="h-[146px] w-full">
        <path d="M11 24V116" stroke="#e4e4e4" />
        <path d="M11 23.500H752" stroke="#e8b84a" />
        <path d="M11 23.500H752" stroke="#6a4a18" strokeDasharray="3 2" />
        <path d="M11 24L752 116" stroke="#158080" strokeDasharray="4 3" />
        <path d="M11 115.500H752" stroke="#9a9ae0" />
        <path d="M11 115.500H752" stroke="#1a1a7a" strokeDasharray="4 2" />
        <path d="M751.500 16v100" stroke="#000" strokeWidth="3" />
        <path d="M751.500 116v6" stroke="#158080" />
        <path d="M8.500 21.500h5v5h-5z" fill="#d8f0f0" stroke="#158080" />
        <path d="M8.500 113.500h5v5h-5z" fill="#d8d8f8" stroke="#1a1a9a" />
        <text x="742" y="12" fontSize="11" fill="#000">1.</text>
        <text x="742" y="140" fontSize="11" fill="#555">1.</text>
      </svg>
      <div className="ml-[11px] mt-3.5 flex h-[18px] items-center justify-center border border-[#9cc4e4] bg-[#0078d7] text-[11px] text-white">
        1
      </div>
    </div>
  </section>
);

const TablePanel = () => {
  const [enabled, setEnabled] = useState(components.map(() => true));
  const toggle = i => setEnabled(prev => prev.map((v, j) => (j === i ? !v : v)));

  return (
    <section className="ml-1.5 flex min-w-0 flex-1 flex-col bg-[#9f9f9f]">
      <PanelHeader title="表格数据" controls={false} shift="pl-1" />
      <table className="mt-px w-[563px] table-fixed border-collapse text-[13px] leading-4 text-black">
        <thead>
          <tr className="h-[23px] bg-[#eeeeee] text-left">
            <th className="w-[17px] border-b border-r border-[#888]" />
            <th className="w-[25px] border-b border-r border-[#888] pl-1 text-[14px] font-normal">步</th>
            <th className="w-[58px] whitespace-nowrap border-b border-r border-[#888] pl-1 font-normal">时间 [s]</th>
            {components.map((c, i) => (
              <th key={c.name} className={`border-b border-r border-[#888] pl-1 font-normal ${c.width}`}>
                <label className="flex items-center justify-between whitespace-nowrap pr-1.5">
                  <span className="relative flex h-[18px] w-[18px] items-center justify-center border-l-2 border-t-2 border-[#777] bg-white">
                    <input
                      type="checkbox"
                      checked={enabled[i]}
                      onChange={() => toggle(i)}
                      className="absolute inset-0 appearance-none"
                    />
                    {enabled[i] && (
                      <svg viewBox="0 0 10 10" className="h-2.5 w-2.5">
                        <path d="M1 4l3 4 5-7" fill="none" stroke="#000" strokeWidth="2.200" />
                      </svg>
                    )}
                  </span>
                  <span className={c.color}>{c.name}</span>
                </label>
              </th>
            ))}
          </tr>
        </thead>
        <tbody>
          {tableRows.map(row => (
            <tr key={row.id} className="h-[22px] bg-white">
              <th className="border-b border-r border-[#888] bg-[#eeeeee] font-normal">{row.id}</th>
              <td className="border-b border-r border-[#888] bg-[#eeeeee] pl-1">{row.step}</td>
              <td className="border-b border-r border-[#c4c4c4] pl-1">{row.time}</td>
              {row.values.map((v, i) => (
                <td key={i} className="border-b border-r border-[#c4c4c4] pl-1">{v}</td>
              ))}
            </tr>
          ))}
        </tbody>
      </table>
    </section>
  );
};

const StatusBar = () => (
  <footer className="flex h-[26px] shrink-0 items-center justify-end overflow-hidden whitespace-nowrap bg-[#0078cc] text-[15px] text-white">
    <button className="mr-[22px] flex items-center gap-1">
      <svg viewBox="0 0 18 18" className={smallIcon}>
        <path d="M1 7h14v8H7l-4 3v-3H1z" fill="#f4c860" />
        <circle cx="11" cy="6" r="6" fill="#1020b0" stroke="#fff" />
        <path d="M11 2v2M11 5v5" stroke="#fff" strokeWidth="1.800" />
      </svg>
      1 消息
    </button>
    <span className="mr-[26px]">无选择</span>
    <button className="mr-6 flex items-center gap-2">
      <svg viewBox="0 0 10 6" className="h-1.5 w-2.5">
        <path d="M0 6h10L5 0z" fill="#fff" />
      </svg>
      度量标准（mm、kg、N、s、mV、mA）
    </button>
    <span className="mr-[18px]">度</span>
    <span>r</span>
  </footer>
);

/* ---------- windows taskbar ---------- */

const Task = ({ label, running, active, children }) => (
  <button
    aria-label={label}
    className={`relative flex h-12 w-[46px] shrink-0 items-center justify-center rounded ${
      active ? 'border border-white/70 bg-white/50' : ''
    }`}
  >
    {children}
    {running && <span className="absolute bottom-0 h-1 w-1.5 rounded-full bg-[#7a8580]" />}
    {active && <span className="absolute bottom-0 h-1 w-[18px] rounded-full bg-[#0a6fc2]" />}
  </button>
);

const taskIcon = 'h-[30px] w-[30px]';

const Taskbar = () => (
  <div className="flex h-[60px] shrink-0 items-center bg-[linear-gradient(100deg,#cfeee4,#cdebe0_25%,#dbe6dc_34%,#c9f0dc_45%,#c8f0e0_53%,#d8edd2_60%,#e8dfce_66%,#c8e6e4_75%,#dcdfdc_85%,#ecd9cc_93%,#dce8d8)] pl-[556px]">
    <div className="flex items-center gap-[9px]">
      <Task label="开始">
        <svg viewBox="0 0 30 30" className={taskIcon}>
          <path d="M1 1h13v13H1zM16 1h13v13H16zM1 16h13v13H1zM16 16h13v13H16z" fill="#0f7fd0" />
        </svg>
      </Task>
      <button className="flex h-[38px] w-[123px] items-center justify-center gap-2 rounded-full bg-[#f4f6f4] text-[15px] text-black">
        <Search className="h-[18px] w-[18px] -scale-x-100" />
        搜索
      </button>
      <div className="flex items-center gap-[9px]">
        <Task label="任务视图">
          <svg viewBox="0 0 30 30" className={taskIcon}>
            <path d="M9 2h20v19H9z" fill="#f2f2f2" />
            <path d="M1 9h22v19H1z" fill="#2b2b2b" />
            <path d="M9 9h14v12H9z" fill="#b4b4b4" />
          </svg>
        </Task>
        <Task label="文件资源管理器" running>
          <svg viewBox="0 0 30 30" className={taskIcon}>
            <path d="M0 3h11l3 4h16v20H0z" fill="#e0a020" />
            <path d="M0 9h30v18H0z" fill="#ffd45e" />
            <path d="M5 20h20v7H5z" fill="#1a7fd0" />
            <path d="M8 23h14v4H8z" fill="#0b5a9c" />
          </svg>
        </Task>
        <Task label="Edge" running>
          <svg viewBox="0 0 30 30" className={taskIcon}>
            <path d="M1 15a14 14 0 0 1 28-1q0 7-8 7-4 0-3-3 2-6-5-7-7 0-12 4z" fill="#3cc884" />
            <path d="M1 15a14 14 0 0 1 14-14q9 0 13 8-14-6-20 1-5 2-7 5z" fill="#28b4d4" />
            <path d="M1 15q3-7 10-6 6 0 7 5-5-3-7 1-2 8 6 10 5 1 9-1-4 6-12 5Q2 27 1 15z" fill="#0f62b8" />
          </svg>
        </Task>
        <Task label="百度">
          <svg viewBox="0 0 30 30" className={taskIcon}>
            <path d="M0 0h30v30H0z" fill="#fff" />
            <path d="M15 11q4 0 6 5 5 4 2 8-2 2-8 1-6 1-8-1-3-4 2-8 2-5 6-5z" fill="#1a4fb4" />
            <ellipse cx="5" cy="12" rx="2.500" ry="3.500" fill="#1a4fb4" />
            <ellipse cx="11" cy="6" rx="2.500" ry="4" fill="#1a4fb4" />
            <ellipse cx="19" cy="6" rx="2.500" ry="4" fill="#1a4fb4" />
            <ellipse cx="25" cy="12" rx="2.500" ry="3.500" fill="#1a4fb4" />
            <text x="9" y="23" fontSize="10" fontWeight="700" fill="#fff">du</text>
            <path d="M7 28h8" stroke="#d02020" strokeWidth="2" />
            <path d="M15 28h8" stroke="#1a4fb4" strokeWidth="2" />
          </svg>
        </Task>
        <Task label="hao123">
          <span className="flex h-[30px] w-[30px] flex-col items-center justify-center bg-white text-[12px] font-semibold leading-[14px]">
            <span className="text-[#3aa048]">hǎo</span>
            <span className="text-[11px] text-[#e87820]">123</span>
          </span>
        </Task>
        <Task label="SolidWorks" running>
          <svg viewBox="0 0 30 30" className={taskIcon}>
            <path d="M1 6l13-5 14 4v19l-14 5L2 25z" fill="#b81820" />
            <path d="M1 6l13-5 14 4-13 4z" fill="#e45050" />
            <path d="M22 7l6-2v19l-6 2z" fill="#7a0c12" />
            <text x="2" y="19" fontSize="12" fontWeight="700" fill="#fff">SW</text>
            <path d="M10 22h19v7H10z" fill="#3a0a0c" />
            <text x="10" y="29" fontSize="8" fontWeight="700" fill="#fff">2021</text>
          </svg>
        </Task>
        <Task label="Workbench" running>
          <svg viewBox="0 0 30 30" className={taskIcon}>
            <path d="M0 0h30v30H0z" fill="#0c0c0c" />
            <path
              d="M15 1l4 2v5l-4 2-4-2V3zM10 10l4 2v5l-4 2-4-2v-5zM20 10l4 2v5l-4 2-4-2v-5zM11 3l4 2 4-2M15 5v5M6 12l4 2 4-2M10 14v5M16 12l4 2 4-2M20 14v5"
              fill="none"
              stroke="#d9a030"
              strokeWidth="1.300"
            />
            <text x="5" y="29" fontSize="11" fontWeight="700" fill="#fff">WB</text>
          </svg>
        </Task>
        <Task label="DesignModeler" active>
          <svg viewBox="0 0 30 30" className={taskIcon}>
            <path d="M0 0h30v30H0z" fill="#0c0c0c" />
            <path d="M8 2l15 8-15 8zM12 7v7l6-4z" fill="none" stroke="#f0a820" strokeWidth="2" />
            <text x="5" y="29" fontSize="11" fontWeight="700" fill="#fff">DM</text>
          </svg>
        </Task>
      </div>
    </div>
    <div className="ml-auto flex shrink-0 items-center text-black">
      <button aria-label="显示隐藏的图标" className="mr-2.5"><ChevronUp className="h-5 w-5" /></button>
      <svg viewBox="0 0 20 20" className="mr-2.5 h-5 w-5">
        <path
          d="M10 10q-6-3-3-8 5-1 7 3M10 10q0-7 6-6 4 4 1 8M10 10q7-1 8 4-2 5-7 4M10 10q4 6-1 9-6-1-6-5M10 10q-5 5-9 1-1-5 4-7M10 10q-6-3-9-1"
          fill="none"
          stroke="#e05a5a"
          strokeWidth="1.500"
        />
      </svg>
      <svg viewBox="0 0 20 20" className="mr-2.5 h-5 w-5">
        <circle cx="10" cy="10" r="9.500" fill="#3cb034" />
        <path d="M1 14A9.500 9.500 0 0 0 19 7q-3-4-5-4 3 12-13 11z" fill="#f2d020" />
        <circle cx="10" cy="10" r="5.500" fill="#3cb034" />
        <path d="M6 10h8M10 6v8" stroke="#fff" strokeWidth="2" />
      </svg>
      <svg viewBox="0 0 22 22" className="mr-3.5 h-[22px] w-[22px]">
        <path d="M2 10a8 8 0 0 1 15-4m1-4v5h-5M9 19a8 8 0 0 1-6-5m-1 5v-5h5" fill="none" stroke="#222" strokeWidth="1.500" />
        <circle cx="16" cy="16" r="5" fill="#1070d0" />
      </svg>
      <Mic className="mr-5 h-5 w-5 text-[#2060b0]" strokeWidth={1.6} />
      <button className="mr-[22px] text-[18px]">中</button>
      <Wifi className="mr-[9px] h-5 w-5" />
      <Volume2 className="mr-2.5 h-5 w-5" strokeWidth={1.6} />
      <svg viewBox="0 0 20 20" className="mr-5 h-5 w-5">
        <path d="M7 6h10v9H4v-4M19 9v4" fill="none" stroke="#222" strokeWidth="1.800" />
        <path d="M8 8h7v5H6z" fill="#222" />
        <path d="M2 2v3M6 2v3M0 5h8v3q-4 4-8 0z" fill="#222" stroke="#222" />
      </svg>
      <span className="mt-[18px] text-[14px]">202</span>
    </div>
  </div>
);

const App = () => (
  <div className="flex h-screen flex-col overflow-hidden bg-[#eeeef1] font-['Noto_Sans','Noto_Sans_CJK_SC',sans-serif] text-[14px] text-[#222]">
    <TitleBar />
    <Ribbon />
    <div className="flex min-h-0 flex-1">
      <aside className="mr-[5px] flex w-[190px] shrink-0 flex-col overflow-hidden pt-px">
        <Outline />
        <Details />
      </aside>
      <div className="flex min-w-0 flex-1 flex-col">
        <GraphicsToolbar />
        <Viewport />
        <div className="mt-1 flex h-[228px] shrink-0">
          <GraphPanel />
          <TablePanel />
        </div>
      </div>
    </div>
    <StatusBar />
    <Taskbar />
  </div>
);

export default App;
